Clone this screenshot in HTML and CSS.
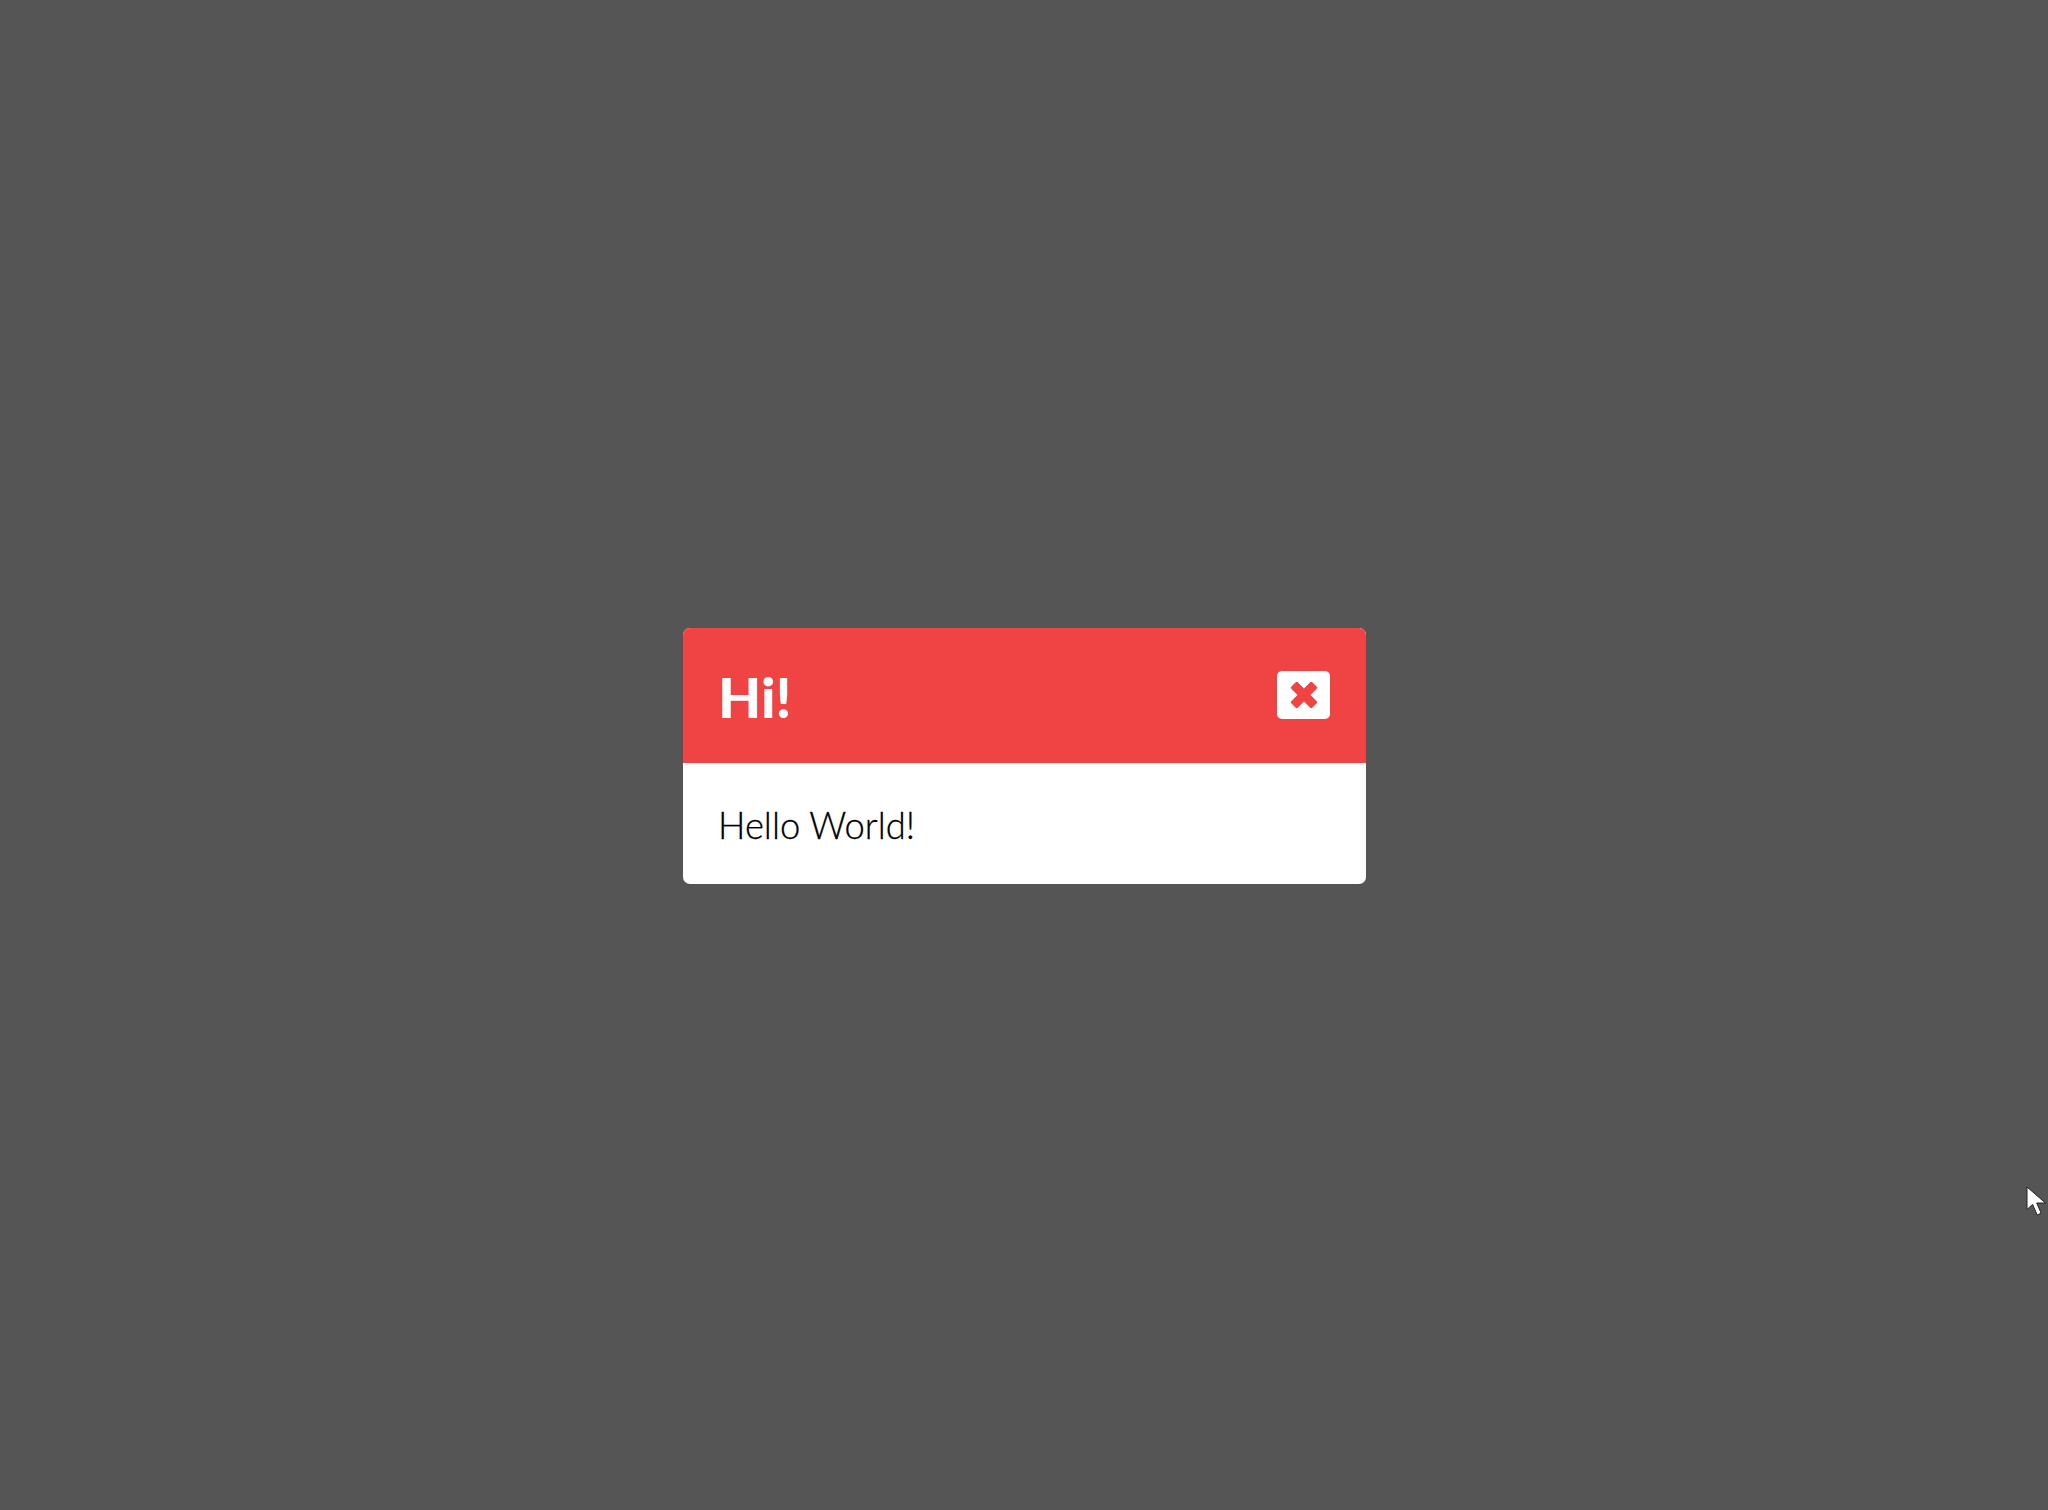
FILE: index.html
```html
<!DOCTYPE html>
<html lang="en">
<head>
<meta charset="utf-8">
<title>Hi!</title>
<link rel="stylesheet" href="styles.css">
</head>
<body>
<div class="modal">
  <header class="modal-header">
    <h1 class="modal-title">Hi!</h1>
    <button class="close" type="button" aria-label="Close">
      <svg class="close-icon" viewBox="0 0 27 27" aria-hidden="true">
        <path d="M7.5 1.2L13.5 7.2L19.5 1.2Q20.5 .3 21.5 1.2L25.8 5.5Q26.7 6.5 25.8 7.5L19.8 13.5L25.8 19.5Q26.7 20.5 25.8 21.5L21.5 25.8Q20.5 26.7 19.5 25.8L13.5 19.8L7.5 25.8Q6.5 26.7 5.5 25.8L1.2 21.5Q.3 20.5 1.2 19.5L7.2 13.5L1.2 7.5Q.3 6.5 1.2 5.5L5.5 1.2Q6.5 .3 7.5 1.2Z" />
      </svg>
    </button>
  </header>
  <div class="modal-body">Hello World!</div>
</div>
<svg class="cursor" viewBox="0 0 21 31" aria-hidden="true">
  <path d="M1 1V23.5L6.6 18.4L11.2 29L15.2 27.2L10.7 17H19.5Z" />
</svg>
</body>
</html>
```
FILE: styles.css
```css
* { box-sizing: border-box; }
html, body { height: 100%; }
body {
  margin: 0;
  background: #555555;
  display: flex;
  align-items: center;
  justify-content: center;
  overflow: hidden;
  padding: 2px 0 0 1px;
}
.modal {
  width: 683px;
  border-radius: 7px;
  overflow: hidden;
  background: #ffffff;
}
.modal-header {
  height: 135px;
  background: #f04444;
  display: flex;
  align-items: center;
  justify-content: space-between;
  padding: 0 36px 1px 35px;
}
.modal-title {
  margin: 4px 0 0;
  color: #ffffff;
  font: 900 56px/1 "Lato", sans-serif;
}
.close {
  width: 53px;
  height: 48px;
  padding: 0;
  border: 0;
  border-radius: 5px;
  background: #ffffff;
  display: flex;
  align-items: center;
  justify-content: center;
}
.close-icon {
  width: 28px;
  height: 28px;
  fill: #f04444;
}
.modal-body {
  height: 121px;
  padding: 40px 35px 0;
  color: #000000;
  font: 300 36.4px/44px "Lato", sans-serif;
  -webkit-text-stroke: 0.3px #000000;
}
.cursor {
  position: absolute;
  left: 2026px;
  top: 1186px;
  width: 21px;
  height: 31px;
  fill: #ffffff;
  stroke: #222222;
  stroke-width: 1;
}
```
